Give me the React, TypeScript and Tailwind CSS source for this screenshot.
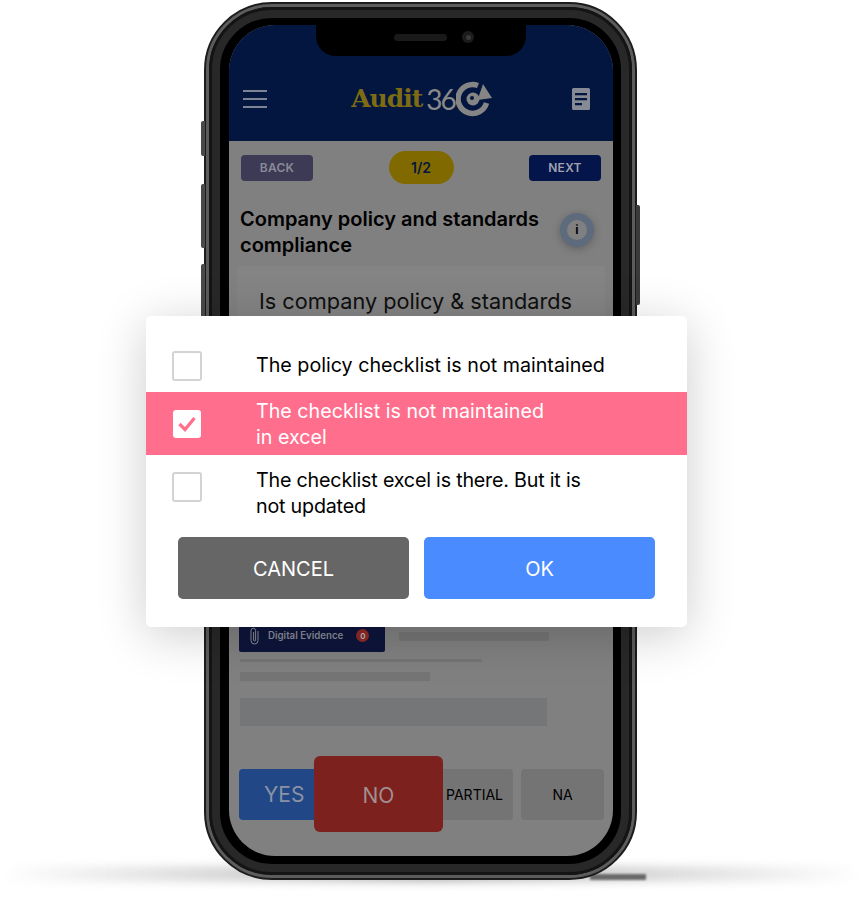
import React from "react";

const font = { fontFamily: '"Inter", "Lato", sans-serif' };

function Logo() {
  return (
    <div className="flex items-center h-[40px] ml-[4px]">
      <span className="font-bold text-[#7f6c12] leading-none tracking-[-1px]" style={{ fontFamily: '"DejaVu Serif", serif', fontSize: 25 }}>Audit</span>
      <span className="ml-[4px] text-[28px] text-[#8a8a8a] leading-none tracking-[-2px]" style={{ fontFamily: '"Lato", sans-serif' }}>36</span>
      <svg width="36" height="36" viewBox="0 0 36 36" className="ml-[1px]">
        <path d="M30.500 22A14.500 14.500 0 1 1 22 4.500" fill="none" stroke="#858585" strokeWidth="5.500" />
        <path d="M27 3l9 14-14.500 2z" fill="#858585" />
        <circle cx="17" cy="18" r="6.500" fill="#858585" />
        <circle cx="16" cy="17" r="2" fill="#03163f" />
      </svg>
    </div>
  );
}

function Choice({ checked, lines, h, textClass }: { checked?: boolean; lines: string[]; h: string; textClass?: string }) {
  return (
    <div className={`flex items-center pl-[26px] ${h} ${checked ? "bg-[#ff6f8d] text-white" : "text-black"}`}>
      <div className="w-[30px] h-[30px] shrink-0 flex items-center justify-center">
        <div className={`rounded-[3px] flex items-center justify-center ${checked ? "w-[28px] h-[28px] bg-white" : "w-[30px] h-[30px] border-[2px] border-[#d3d3d3]"}`}>
          {checked && (
            <svg width="20" height="18" viewBox="0 0 20 18"><path d="M2.500 9l5.500 5.500L17.500 3" fill="none" stroke="#ff6f8d" strokeWidth="3.200" /></svg>
          )}
        </div>
      </div>
      <div className={`ml-[54px] text-[19.700px] leading-[26px] ${textClass ?? ""}`}>
        {lines.map((l) => <div key={l}>{l}</div>)}
      </div>
    </div>
  );
}

export default function App() {
  return (
    <div className="relative w-[863px] h-[897px] bg-white overflow-hidden" style={font}>
      {/* ground shadow */}
      <div className="absolute left-0 top-[866px] w-[863px] h-[16px] blur-[4px] bg-gradient-to-r from-transparent via-[#b4b4b4] to-transparent" />
      <div className="absolute left-[590px] top-[874px] w-[56px] h-[6px] bg-[#6a6a6a] blur-[1px]" />

      {/* phone */}
      <div className="relative ml-[204px] mt-[2px] w-[433px] h-[878px] rounded-[68px] border-[2px] border-[#1c1c1c] bg-[#1c1c1c]">
        <div className="absolute -left-[5px] top-[117px] w-[4px] h-[35px] bg-[#4a4a4a] rounded-l-[2px]" />
        <div className="absolute -left-[5px] top-[180px] w-[4px] h-[64px] bg-[#4a4a4a] rounded-l-[2px]" />
        <div className="absolute -left-[5px] top-[260px] w-[4px] h-[64px] bg-[#4a4a4a] rounded-l-[2px]" />
        <div className="absolute -right-[5px] top-[201px] w-[4px] h-[100px] bg-[#3a3a3a] rounded-r-[2px]" />
        <div className="w-full h-full rounded-[66px] border-[3px] border-[#5c5c5c]">
          <div className="w-full h-full rounded-[63px] border-[3px] border-[#141414]">
            <div className="w-full h-full rounded-[60px] border-[8px] border-[#282828] bg-black pl-[9px] pt-[7px]">
              <div className="relative w-[384px] h-[831px] rounded-[46px] overflow-hidden bg-[#808080]">
                {/* notch */}
                <div className="absolute left-[87px] top-0 w-[210px] h-[31px] bg-black rounded-b-[20px] z-10">
                  <div className="absolute left-[78px] top-[9px] w-[53px] h-[7px] rounded-full bg-[#1a1a1a]" />
                  <div className="absolute left-[146px] top-[6px] w-[12px] h-[12px] rounded-full bg-[#1c1c1c] flex items-center justify-center">
                    <div className="w-[5px] h-[5px] rounded-full bg-[#3a3a3a]" />
                  </div>
                </div>
                {/* header */}
                <div className="h-[116px] bg-[#03163f] flex items-center justify-between pl-[14px] pr-[23px] pt-[31px]">
                  <div className="flex flex-col gap-[6px] w-[24px]">
                    <div className="h-[2px] bg-[#7d8595]" />
                    <div className="h-[2px] bg-[#7d8595]" />
                    <div className="h-[2px] bg-[#7d8595]" />
                  </div>
                  <Logo />
                  <svg width="18" height="22" viewBox="0 0 18 22">
                    <path d="M1.500 0h15A1.500 1.500 0 0 1 18 1.500v19a1.500 1.500 0 0 1-1.500 1.500h-15A1.500 1.500 0 0 1 0 20.500v-19A1.500 1.500 0 0 1 1.500 0z" fill="#858a94" />
                    <path d="M3 5h12v2.200H3zM3 10h12v2.200H3zM3 15h7v2.200H3z" fill="#03163f" />
                  </svg>
                </div>
                {/* nav */}
                <div className="flex items-center justify-between px-[12px] mt-[10px] h-[33px]">
                  <div className="w-[72px] h-[26px] rounded-[4px] bg-[#3c3a55] text-[#8a8a98] text-[12px] font-semibold flex items-center justify-center tracking-[0.3px]">BACK</div>
                  <div className="w-[65px] h-[33px] rounded-full bg-[#806a00] text-[#03163f] text-[14px] font-semibold flex items-center justify-center">1/2</div>
                  <div className="w-[72px] h-[26px] rounded-[4px] bg-[#03154a] text-[#a0a3b0] text-[12px] font-semibold flex items-center justify-center tracking-[0.3px]">NEXT</div>
                </div>
                {/* title */}
                <div className="flex items-center justify-between pl-[11px] pr-[19px] mt-[22px]">
                  <div className="text-[20px] leading-[26px] font-semibold text-black w-[320px]">Company policy and standards compliance</div>
                  <div className="w-[34px] h-[34px] rounded-full bg-[#5d6b7c] shadow-[0_2px_8px_rgba(0,0,0,0.25)] flex items-center justify-center mt-[-4px]">
                    <div className="w-[20px] h-[20px] rounded-full bg-[#808080] text-black text-[12px] font-bold flex items-center justify-center">i</div>
                  </div>
                </div>
                {/* card */}
                <div className="mx-[8px] mt-[8px] h-[354px] w-[368px] rounded-t-[4px] bg-[#848484] pt-[20px] pl-[22px] text-[21.700px] leading-[30px] text-[#0f0f0f]">
                  Is company policy &amp; standards
                </div>
                {/* evidence */}
                <div className="flex items-start pl-[10px] h-[32px]">
                  <div className="w-[146px] h-[32px] rounded-b-[2px] bg-[#0d153b] flex items-start pt-[7px] pl-[9px] text-[#8a8d98] text-[9.700px] leading-[18px] font-semibold whitespace-nowrap">
                    <svg width="13" height="18" viewBox="0 0 12 18" className="mr-[7px] shrink-0"><path d="M9.500 4v9.500a3.500 3.500 0 0 1-7 0V3.500a2.300 2.300 0 0 1 4.600 0V13a1 1 0 0 1-2 0V5" fill="none" stroke="#8a8d98" strokeWidth="1" /></svg>
                    Digital Evidence
                    <span className="ml-[13px] mt-[2px] w-[13px] h-[13px] shrink-0 rounded-full bg-[#8f2a28] text-[#bbb] text-[8px] flex items-center justify-center">0</span>
                  </div>
                  <div className="ml-[14px] mt-[12px] w-[150px] h-[9px] bg-[#757575]" />
                </div>
                <div className="ml-[11px] mt-[7px] w-[242px] h-[3px] bg-[#757575]" />
                <div className="ml-[11px] mt-[10px] w-[190px] h-[9px] bg-[#757575]" />
                <div className="ml-[11px] mt-[17px] w-[307px] h-[28px] bg-[#757678]" />
                {/* answers */}
                <div className="flex items-center pl-[10px] mt-[30px] text-black">
                  <div className="w-[85px] h-[51px] rounded-[4px] bg-[#214786] text-[#8a93a5] text-[21px] flex items-center pl-[25px] pt-[2px]">YES</div>
                  <div className="relative z-[1] -ml-[10px] w-[129px] h-[76px] rounded-[6px] bg-[#7c211e] text-[#a08f8f] text-[21px] flex items-center justify-center pt-[3px]">NO</div>
                  <div className="w-[70px] h-[51px] rounded-r-[4px] bg-[#747474] text-[14px] flex items-center justify-end pr-[10px]">PARTIAL</div>
                  <div className="ml-[8px] w-[83px] h-[51px] rounded-[4px] bg-[#747474] text-[14px] flex items-center justify-center">NA</div>
                </div>
              </div>
            </div>
          </div>
        </div>
      </div>

      {/* dialog */}
      <div className="absolute left-[146px] top-[316px] w-[541px] h-[311px] rounded-[5px] bg-white shadow-[0_8px_50px_rgba(0,0,0,0.2)] pt-[24px]">
        <Choice lines={["The policy checklist is not maintained"]} h="h-[52px]" textClass="-mt-[3px]" />
        <Choice checked lines={["The checklist is not maintained", "in excel"]} h="h-[63px]" />
        <Choice textClass="mt-[11px] tracking-[-0.2px]" lines={["The checklist excel is there. But it is", "not updated"]} h="h-[64px]" />
        <div className="flex gap-[15px] px-[32px] mt-[18px]">
          <div className="w-[231px] h-[62px] rounded-[5px] bg-[#666666] text-white text-[20px] flex items-center justify-center pt-[1px]">CANCEL</div>
          <div className="w-[231px] h-[62px] rounded-[5px] bg-[#4a8bff] text-white text-[20px] flex items-center justify-center pt-[1px]">OK</div>
        </div>
      </div>
    </div>
  );
}
